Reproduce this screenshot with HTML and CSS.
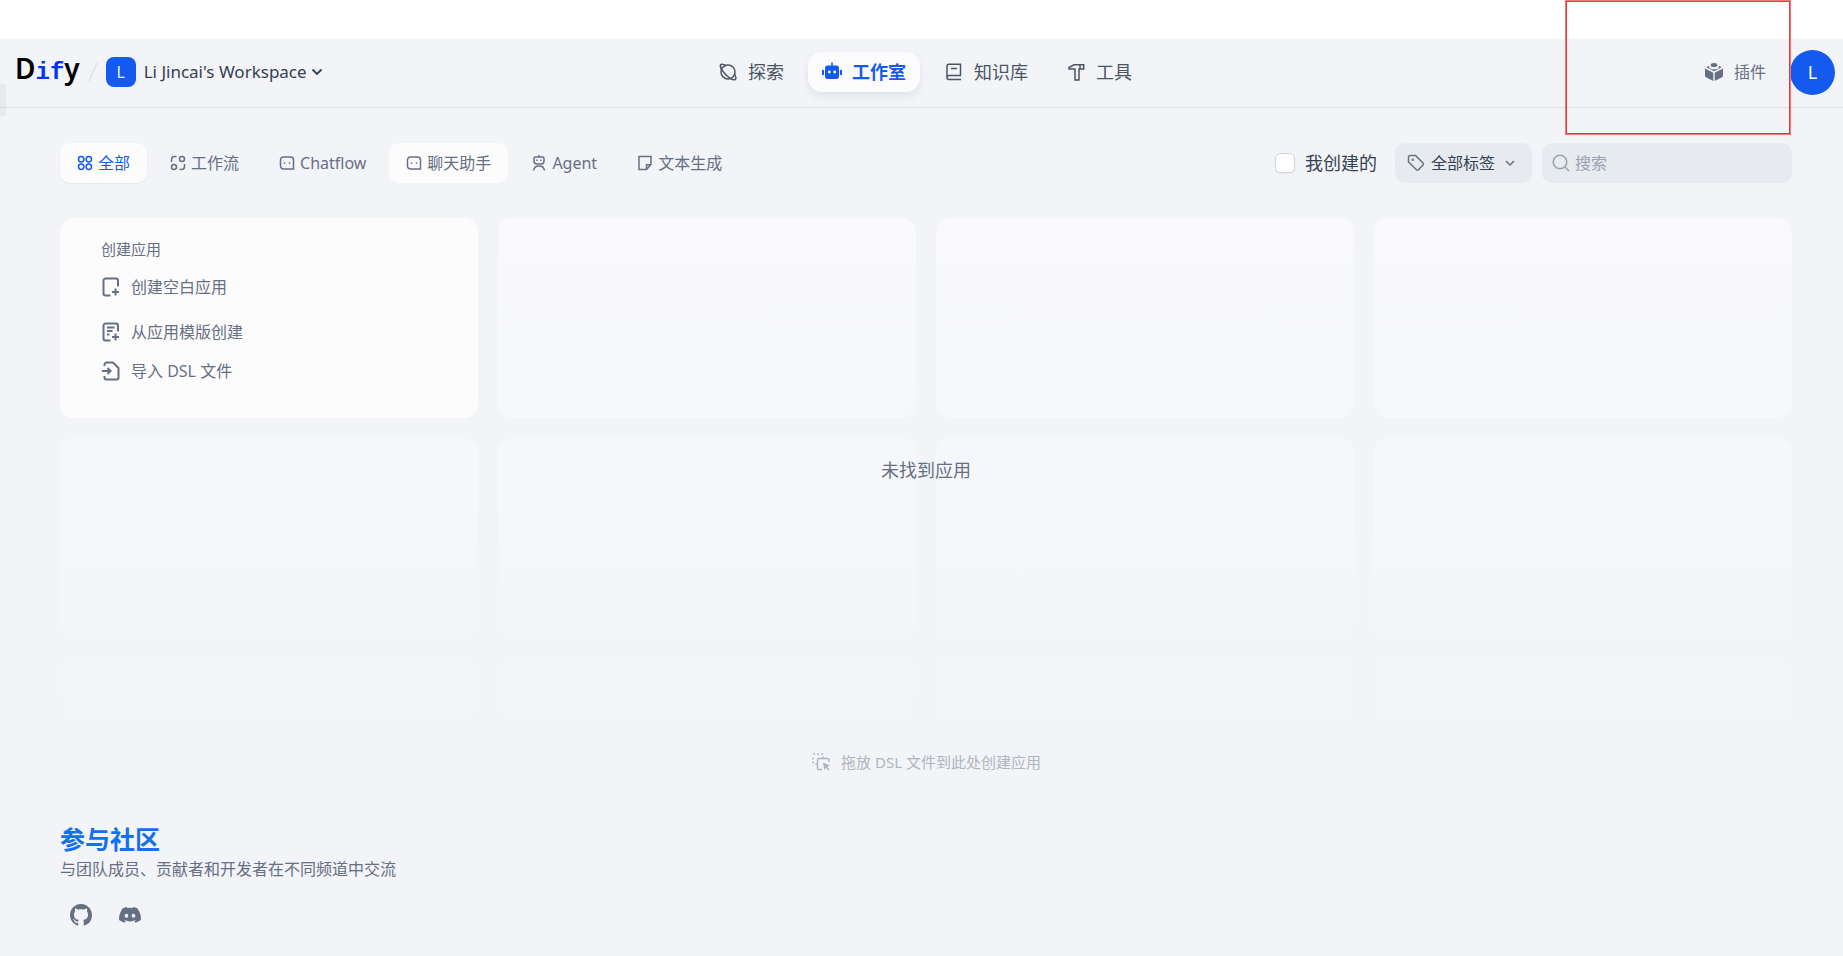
FILE: index.html
```html
<!DOCTYPE html>
<html lang="zh-CN">
	<head>
		<meta charset="UTF-8">
		<title>工作室 - Dify</title>
		<link rel="stylesheet" href="styles.css">
	</head>
	<body>
		<header class="header">
			<div class="header-left">
				<a href="#" class="logo">D<span class="logo-if">if</span>y</a>
				<svg class="slash" width="10" height="20" viewBox="0 0 10 20"><path d="M9 1L1 19"/></svg>
				<button type="button" class="workspace">
					<span class="workspace-icon">L</span>
					<span class="workspace-name">Li Jincai's Workspace</span>
					<svg class="icon" width="12" height="12" viewBox="0 0 12 12"><path d="M1.500 3.500L6 8L10.500 3.500" stroke-width="1.800"/></svg>
				</button>
			</div>
			<nav class="nav">
				<a href="#" class="nav-item">
					<svg class="icon" width="20" height="20" viewBox="0 0 20 20"><circle cx="10" cy="10" r="7"/><path d="M7.500 3.400C5 1.800 3.200 1.900 2.600 2.900C1.800 4.300 3.600 8.300 7.200 12C10.800 15.700 15.300 18.500 17.200 17.500C18.300 16.800 18 14.800 16.700 12.500"/></svg>
					<span>探索</span>
				</a>
				<a href="#" class="nav-item active">
					<svg class="icon-fill" width="20" height="20" viewBox="0 0 20 20"><path fill-rule="evenodd" d="M9.200 0.500h1.600V3.500H14.500a2.500 2.500 0 0 1 2.500 2.500V14.500a2.500 2.500 0 0 1-2.500 2.500H5.500A2.500 2.500 0 0 1 3 14.500V6A2.500 2.500 0 0 1 5.500 3.500H9.200zM7.300 8.600a1.400 1.400 0 1 0 0 2.800a1.400 1.400 0 0 0 0-2.800zM12.700 8.600a1.400 1.400 0 1 0 0 2.800a1.400 1.400 0 0 0 0-2.800z"/><path d="M0 8H2v5H0zM18 8h2v5H18z"/></svg>
					<span>工作室</span>
				</a>
				<a href="#" class="nav-item">
					<svg class="icon" width="20" height="20" viewBox="0 0 20 20"><path d="M17 13.500H5A2 2 0 0 0 5 17.500H17M3 15.500V4A1.800 1.800 0 0 1 4.800 2.200H16.500V13.500M7 6.500H13"/></svg>
					<span>知识库</span>
				</a>
				<a href="#" class="nav-item">
					<svg class="icon" width="20" height="20" viewBox="0 0 20 20"><path d="M17.700 2.800V7H13V18H9V7H3V5.500L8 2.800ZM14 2.800V7"/></svg>
					<span>工具</span>
				</a>
			</nav>
			<div class="header-right">
				<a href="#" class="plugins">
					<svg class="icon-fill" width="20" height="20" viewBox="0 0 20 20"><path d="M1 6.400L9.300 10.700V19L2 15.200A2 2 0 0 1 1 13.500zM19 6.400L10.700 10.700V19L18 15.200A2 2 0 0 0 19 13.500zM2.300 5.200L5 3.800V4.900C5 6.400 7.200 7.300 10 7.300S15 6.400 15 4.900V3.800L17.700 5.200L10 9.300z"/><ellipse cx="10" cy="3" rx="3.300" ry="2"/></svg>
					<span>插件</span>
				</a>
				<button type="button" class="avatar" aria-label="L">L</button>
			</div>
		</header>

		<!-- 红色标注框 -->
		<div class="mark"></div>
		<div class="handle"></div>

		<main class="main">
			<div class="toolbar">
				<div class="tabs">
					<button type="button" class="tab active">
						<svg class="icon" width="16" height="16" viewBox="0 0 16 16"><circle cx="4.200" cy="4.200" r="2.700"/><circle cx="11.800" cy="4.200" r="2.700"/><circle cx="4.200" cy="11.800" r="2.700"/><circle cx="11.800" cy="11.800" r="2.700"/></svg>
						全部
					</button>
					<button type="button" class="tab">
						<svg class="icon" width="16" height="16" viewBox="0 0 16 16"><circle cx="12" cy="4" r="2.500"/><circle cx="4" cy="12" r="2.500"/><path d="M1.500 7V4.500A3 3 0 0 1 4.500 1.500H6.500M14.500 9V11.500A3 3 0 0 1 11.500 14.500H9.500"/></svg>
						工作流
					</button>
					<button type="button" class="tab">
						<svg class="icon" width="16" height="16" viewBox="0 0 16 16"><path d="M4.500 2H11.500A3 3 0 0 1 14.500 5V14H4.500A3 3 0 0 1 1.500 11V5A3 3 0 0 1 4.500 2ZM5.500 7.200V8.800M10.500 7.200V8.800"/></svg>
						Chatflow
					</button>
					<button type="button" class="tab selected">
						<svg class="icon" width="16" height="16" viewBox="0 0 16 16"><path d="M4.500 2H11.500A3 3 0 0 1 14.500 5V14H4.500A3 3 0 0 1 1.500 11V5A3 3 0 0 1 4.500 2ZM5.500 7.200V8.800M10.500 7.200V8.800"/></svg>
						聊天助手
					</button>
					<button type="button" class="tab">
						<svg class="icon" width="16" height="16" viewBox="0 0 16 16"><path d="M8 0V2M4.500 2H11.500A1.500 1.500 0 0 1 13 3.500V6A3 3 0 0 1 10 9H6A3 3 0 0 1 3 6V3.500A1.500 1.500 0 0 1 4.500 2ZM6 4.500V6M10 4.500V6M2.500 15.500C3 12.500 5.300 11 8 11S13 12.500 13.500 15.500"/></svg>
						Agent
					</button>
					<button type="button" class="tab">
						<svg class="icon" width="16" height="16" viewBox="0 0 16 16"><path d="M2 1.500H14V9.500L9.500 14.500H2ZM14 9.800H9.500V14.500"/></svg>
						文本生成
					</button>
				</div>
				<div class="filters">
					<label class="mine"><input type="checkbox" class="checkbox">我创建的</label>
					<button type="button" class="tags">
						<svg class="icon" width="18" height="18" viewBox="0 0 18 18"><path d="M1.500 3A1.500 1.500 0 0 1 3 1.500H8.500L16 9A1.500 1.500 0 0 1 16 11L11.500 15.800A1.500 1.500 0 0 1 9.500 15.800L1.500 8Z"/><circle cx="5.800" cy="5.800" r="0.500"/></svg>
						<span>全部标签</span>
						<svg class="icon" width="12" height="12" viewBox="0 0 12 12"><path d="M2 4L6 8L10 4"/></svg>
					</button>
					<label class="search">
						<svg class="icon" width="18" height="18" viewBox="0 0 18 18"><circle cx="8" cy="8" r="6.800"/><path d="M13 13L17 17"/></svg>
						<input type="text" class="search-input" placeholder="搜索" aria-label="搜索">
					</label>
				</div>
			</div>

			<div class="apps">
				<section class="card create">
					<h2 class="create-title">创建应用</h2>
					<button type="button" class="create-item">
						<svg class="icon" width="20" height="20" viewBox="0 0 20 20"><path d="M9.500 18.500H4.500A2 2 0 0 1 2.500 16.500V3.500A2 2 0 0 1 4.500 1.500H15A2 2 0 0 1 17 3.500V9.500M14.500 11.500V18.500M11 15H18"/></svg>
						创建空白应用
					</button>
					<button type="button" class="create-item template">
						<svg class="icon" width="20" height="20" viewBox="0 0 20 20"><path d="M9.500 18.500H4.500A2 2 0 0 1 2.500 16.500V3.500A2 2 0 0 1 4.500 1.500H15A2 2 0 0 1 17 3.500V9.500M14.500 11.500V18.500M11 15H18M6 5.500H13.500M6 9H11.500M6 12.500H8.500"/></svg>
						从应用模版创建
					</button>
					<button type="button" class="create-item">
						<svg class="icon" width="20" height="20" viewBox="0 0 20 20"><path d="M3.500 5V3.500A2 2 0 0 1 5.500 1.500H12L17.500 7V16.500A2 2 0 0 1 15.500 18.500H5.500A2 2 0 0 1 3.500 16.500V15M1 10H9.500M6.500 7L9.500 10L6.500 13"/></svg>
						导入 DSL 文件
					</button>
				</section>
				<div class="card"></div>
				<div class="card"></div>
				<div class="card"></div>
				<div class="card"></div>
				<div class="card"></div>
				<div class="card"></div>
				<div class="card"></div>
				<div class="card"></div>
				<div class="card"></div>
				<div class="card"></div>
				<div class="card"></div>
				<p class="empty">未找到应用</p>
			</div>

			<div class="drop">
				<svg class="icon" width="20" height="20" viewBox="0 0 20 20"><path d="M2 2H14" stroke-dasharray="2 2"/><path d="M2 5.500V14" stroke-dasharray="2 2"/><path d="M11 17.500H8A1.500 1.500 0 0 1 6.500 16V8A1.500 1.500 0 0 1 8 6.500H16.500A1.500 1.500 0 0 1 18 8V10M12 4.500V6.500M4.500 12H6.500"/><path class="cursor" d="M12 10.500L19 13.500L16.300 14.600L18.500 17.500L17 18.500L15 15.800L13.300 18Z"/></svg>
				<span>拖放 DSL 文件到此处创建应用</span>
			</div>

			<footer class="footer">
				<h3 class="footer-title">参与社区</h3>
				<p class="footer-text">与团队成员、贡献者和开发者在不同频道中交流</p>
				<div class="social">
					<a href="#" aria-label="GitHub"><svg class="icon-fill" width="22" height="22" viewBox="0 0 16 16"><path d="M8 0C3.580 0 0 3.580 0 8c0 3.540 2.290 6.530 5.470 7.590.4.070.55-.17.55-.38 0-.19-.01-.82-.01-1.490-2.010.37-2.530-.49-2.690-.94-.09-.23-.48-.94-.82-1.130-.28-.15-.68-.52-.01-.53.63-.01 1.080.58 1.230.82.72 1.210 1.870.87 2.330.66.07-.52.28-.87.51-1.070-1.780-.2-3.640-.89-3.640-3.950 0-.87.31-1.590.82-2.150-.08-.2-.36-1.020.08-2.120 0 0 .67-.21 2.200.82.64-.18 1.320-.27 2-.27s1.360.09 2 .27c1.530-1.040 2.200-.82 2.200-.82.44 1.100.16 1.920.08 2.120.51.56.82 1.270.82 2.150 0 3.070-1.870 3.750-3.650 3.950.29.25.54.73.54 1.480 0 1.070-.01 1.930-.01 2.200 0 .21.15.46.55.38A8.010 8.010 0 0 0 16 8c0-4.420-3.580-8-8-8z"/></svg></a>
					<a href="#" aria-label="Discord"><svg class="icon-fill" width="24" height="24" viewBox="0 0 24 24"><path d="M19.300 5.300A16 16 0 0 0 15.200 4l-.6 1.100a15 15 0 0 0-5.200 0L8.800 4a16 16 0 0 0-4.100 1.300C2 9.300 0.700 13.200 1.100 17.100A16 16 0 0 0 6.600 19.700l1.100-1.700-1.600-.8.400-.3a11.500 11.500 0 0 0 11 0l.4.300-1.600.8 1.100 1.700a16 16 0 0 0 5.500-2.600c.5-4.500-1.200-8.400-3.600-11.800zM8.500 14.700c-1 0-1.800-.9-1.800-2s.8-2 1.800-2 1.800.9 1.800 2-.8 2-1.800 2zm7 0c-1 0-1.800-.9-1.800-2s.8-2 1.800-2 1.800.9 1.800 2-.8 2-1.800 2z"/></svg></a>
				</div>
			</footer>
		</main>
	</body>
</html>
```

FILE: styles.css
```css
* {
	margin: 0;
	padding: 0;
	box-sizing: border-box;
}
body {
	position: relative;
	min-height: 100vh;
	padding-top: 39px;
	background: linear-gradient(#fff 39px, #f2f4f8 39px);
	font-family: "Noto Sans", "Noto Sans CJK SC", sans-serif;
	font-size: 16px;
	line-height: 24px;
	color: #676f83;
}
button, input {
	font: inherit;
	color: inherit;
	border: none;
	background: none;
}
a {
	color: inherit;
	text-decoration: none;
}
svg {
	flex: none;
	display: block;
}
.icon {
	fill: none;
	stroke: currentColor;
	stroke-width: 1.5;
}
.icon-fill {
	fill: currentColor;
}

/* 顶部导航 */
.header {
	display: grid;
	grid-template-columns: 1fr auto 1fr;
	align-items: center;
	height: 69px;
	padding: 0 8px 2px 15px;
	border-bottom: 1px solid #dfe1e6;
}
.header-left, .header-right, .nav, .workspace, .plugins, .nav-item {
	display: flex;
	align-items: center;
}
.header-left {
	gap: 8px;
}
.logo {
	padding-bottom: 4px;
	font-family: "Noto Sans", sans-serif;
	font-size: 28px;
	font-weight: 600;
	line-height: 32px;
	color: #000;
}
.logo-if {
	font-family: "Liberation Mono", monospace;
	font-size: 24px;
	font-weight: bold;
	color: #0033ff;
}
.slash {
	fill: none;
	stroke: #d5d8df;
}
.workspace {
	gap: 8px;
	color: #354052;
}
.workspace-name {
	margin-right: -4px;
	font-size: 17px;
}
.workspace-icon {
	width: 30px;
	height: 30px;
	border-radius: 8px;
	background: #155aef;
	color: #e8efff;
	line-height: 30px;
}
.nav {
	gap: 10px;
}
.nav-item {
	gap: 10px;
	height: 40px;
	padding: 0 14px;
	border-radius: 14px;
	font-size: 18px;
	color: #495464;
}
.nav-item.active {
	background: #fcfcfd;
	box-shadow: 0 4px 8px rgba(16, 24, 40, 0.08);
	color: #155aef;
	font-weight: bold;
}
.header-right {
	justify-content: flex-end;
	gap: 24px;
}
.plugins {
	gap: 10px;
}
.avatar {
	width: 45px;
	height: 45px;
	border-radius: 50%;
	background: #155aef;
	color: #fff;
	font-size: 18px;
}
.mark {
	position: absolute;
	top: 0;
	right: 52px;
	width: 226px;
	height: 135px;
	border: 2px solid #f0787b;
	outline: 1px solid #e5383b;
	outline-offset: -2px;
	pointer-events: none;
}
.handle {
	position: absolute;
	top: 84px;
	left: 0;
	width: 6px;
	height: 32px;
	border-radius: 0 4px 4px 0;
	background: rgba(0, 0, 0, 0.04);
}

/* 筛选栏 */
.main {
	padding: 35px 51px 28px 60px;
}
.toolbar {
	display: flex;
	justify-content: space-between;
	margin-bottom: 35px;
}
.tabs, .filters, .tab, .mine, .tags, .search {
	display: flex;
	align-items: center;
}
.tabs {
	gap: 6px;
}
.tab {
	gap: 5px;
	height: 40px;
	padding: 0 17px;
	border-radius: 10px;
}
.tab.active, .tab.selected {
	background: #fcfcfd;
}
.tab.active {
	color: #155aef;
	box-shadow: 0 1px 2px rgba(16, 24, 40, 0.06);
}
.filters {
	gap: 10px;
}
.mine {
	gap: 10px;
	margin-right: 8px;
	font-size: 18px;
	color: #354052;
}
.checkbox {
	appearance: none;
	width: 20px;
	height: 20px;
	border: 1px solid #d0d5dc;
	border-radius: 5px;
	background: #fff;
	box-shadow: 0 1px 2px rgba(16, 24, 40, 0.05);
}
.tags {
	gap: 6px;
	height: 40px;
	padding: 0 16px 0 12px;
	border-radius: 10px;
	background: #e7eaef;
}
.tags span {
	margin-right: 3px;
	color: #354052;
}
.search {
	gap: 5px;
	width: 250px;
	height: 40px;
	padding: 0 10px;
	border-radius: 10px;
	background: #e7eaef;
	color: #98a2b2;
}
.search-input {
	width: 100%;
	outline: none;
}
.search-input::placeholder {
	color: #98a2b2;
}

/* 应用列表 */
.apps {
	position: relative;
	display: grid;
	grid-template-columns: repeat(4, 1fr);
	grid-template-rows: 200px 200px 80px;
	gap: 20px;
}
/* 向下渐隐 */
.apps::after {
	content: "";
	position: absolute;
	inset: 0;
	background: linear-gradient(rgba(242, 244, 248, 0.3), #f2f4f8);
}
.card {
	border-radius: 14px;
	background: #fcfcfd;
}
.create {
	position: relative;
	z-index: 1;
	padding: 19px 41px;
}
.create-title {
	margin-bottom: 14px;
	font-size: 15px;
	font-weight: normal;
	line-height: 24px;
}
.create-item {
	display: flex;
	align-items: center;
	gap: 10px;
	height: 24px;
	margin-bottom: 15px;
}
.create-item .icon {
	stroke-width: 2;
}
.create-item.template {
	margin-top: 21px;
}
.empty {
	position: absolute;
	top: 240px;
	left: 0;
	right: 0;
	z-index: 2;
	font-size: 18px;
	text-align: center;
}
.drop {
	display: flex;
	justify-content: center;
	align-items: center;
	gap: 10px;
	margin-top: 12px;
	font-size: 15px;
	color: #b1b5bf;
}
.drop .cursor {
	fill: currentColor;
	stroke: none;
}

/* 社区 */
.footer {
	margin-top: 47px;
}
.footer-title {
	font-size: 25px;
	line-height: 36px;
	color: #1570ef;
}
.social {
	display: flex;
	align-items: center;
	gap: 26px;
	margin-top: 22px;
	padding-left: 10px;
}
```
